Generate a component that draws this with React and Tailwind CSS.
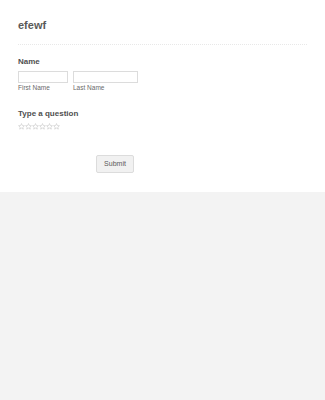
const Star = () => (
    <svg width="7" height="7" viewBox="0 0 24 24" fill="none" stroke="#b8b8b8" strokeWidth="1.6" strokeLinejoin="round">
        <path d="M12 2l2.9 6.6 7.1.7-5.4 4.8 1.6 7-6.2-3.7-6.2 3.7 1.6-7L2 9.3l7.1-.7z" />
    </svg>
);

const App = () => {
    return (
        <div className="min-h-screen bg-[#f3f3f3]" style={{ fontFamily: '"Liberation Sans", Arial, sans-serif' }}>
            <div className="h-[192px] bg-white px-[18px]">
                {/* form header */}
                <div className="pt-[19px] h-[44px]">
                    <h1 className="text-[11px] leading-[13px] font-bold text-[#5a5a5a]">efewf</h1>
                </div>
                <div className="w-[289px] border-t border-dotted border-[#e8e8e8]"></div>

                {/* name field */}
                <div className="mt-[12px]">
                    <div className="text-[8px] leading-[10px] font-bold text-[#505050]">Name</div>
                    <div className="flex gap-[5px] mt-[4px]">
                        <div>
                            <div className="w-[50px] h-[12px] border border-[#dcdcdc] bg-white"></div>
                            <div className="text-[6.5px] leading-[8px] mt-[1px] text-[#6a6a6a]">First Name</div>
                        </div>
                        <div>
                            <div className="w-[65px] h-[12px] border border-[#dcdcdc] bg-white"></div>
                            <div className="text-[6.5px] leading-[8px] mt-[1px] text-[#6a6a6a]">Last Name</div>
                        </div>
                    </div>
                </div>

                {/* rating field */}
                <div className="mt-[17px]">
                    <div className="text-[8px] leading-[10px] font-bold text-[#505050]">Type a question</div>
                    <div className="flex mt-[4px]">
                        {[0, 1, 2, 3, 4, 5].map(i => <Star key={i} />)}
                    </div>
                </div>

                <div className="mt-[19px] ml-[78px]">
                    <button className="w-[38px] h-[18px] rounded-[2px] border border-[#dcdcdc] bg-[#f1f1f1] text-[7px] text-[#5a5a5a]">Submit</button>
                </div>
            </div>
        </div>
    )
}

export default App;
